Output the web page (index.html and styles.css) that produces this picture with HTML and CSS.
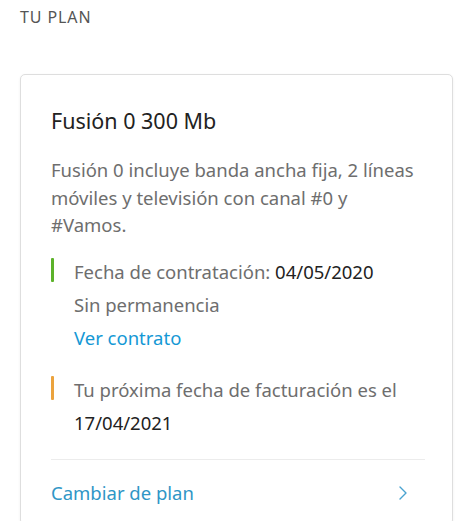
FILE: index.html
```html
<!DOCTYPE html>
<html lang="es">
<head>
<meta charset="utf-8">
<title>Tu plan</title>
<link rel="stylesheet" href="styles.css">
</head>
<body>
<div class="page">
  <h2 class="section-title">TU PLAN</h2>
  <div class="card">
    <div class="card-body">
      <h3 class="plan-name">Fusión 0 300 Mb</h3>
      <p class="plan-desc">Fusión 0 incluye banda ancha fija, 2 líneas móviles y televisión con canal #0 y #Vamos.</p>
      <div class="info info-green">
        <p class="info-line">Fecha de contratación: <span class="strong">04/05/2020</span></p>
        <p class="info-line">Sin permanencia</p>
        <p class="info-line"><a class="link" href="#">Ver contrato</a></p>
      </div>
      <div class="info info-orange">
        <p class="info-line">Tu próxima fecha de facturación es el <span class="strong">17/04/2021</span></p>
      </div>
    </div>
    <div class="card-action">
      <span class="action-text">Cambiar de plan</span>
      <svg class="chevron" width="10" height="16" viewBox="0 0 10 16"><path d="M2 2 L8 8 L2 14" fill="none" stroke="#4aa3d0" stroke-width="1.4" stroke-linecap="round" stroke-linejoin="round"/></svg>
    </div>
  </div>
</div>
</body>
</html>
```

FILE: styles.css
```css
* { box-sizing: border-box; }
html, body { margin: 0; padding: 0; background: #fff; }
body {
  font-family: "Noto Sans", "Open Sans", sans-serif;
  color: #6e6e6e;
  width: 474px;
  height: 521px;
  overflow: hidden;
}
.page { padding: 7px 21px 0 20px; }
.section-title {
  margin: 0;
  font-size: 16px;
  letter-spacing: 0.9px;
  line-height: 20px;
  font-weight: 400;
  color: #555;
}
.card {
  margin-top: 47px;
  border: 1px solid #dedede;
  border-radius: 5px;
  box-shadow: 0 1px 3px rgba(0,0,0,0.06);
  background: #fff;
  padding: 0 27px 0 30px;
}
.card-body { padding-top: 32px; padding-bottom: 20px; border-bottom: 1px solid #ececec; }
.plan-name {
  margin: 0;
  font-size: 21.5px;
  line-height: 28px;
  font-weight: 400;
  color: #222;
}
.plan-desc {
  margin: 21px 0 0 0;
  font-size: 18.5px;
  line-height: 27.5px;
}
.info {
  position: relative;
  padding-left: 23px;
  margin-top: 16px;
}
.info::before {
  content: "";
  position: absolute;
  left: 0; top: 3px;
  width: 3px; height: 24px;
  border-radius: 1px;
}
.info-green::before { background: #5cb22a; }
.info-orange::before { background: #eba33e; }
.info-orange { margin-top: 19px; }
.info-line {
  margin: 0;
  font-size: 18.5px;
  line-height: 33px;
}
.strong { color: #222; }
.link { color: #1498d5; text-decoration: none; }
.card-action {
  display: flex;
  align-items: center;
  justify-content: space-between;
  padding: 18px 17px 16px 0;
}
.action-text { font-size: 18.5px; line-height: 30px; color: #2f96c6; }
.chevron { display: block; }
```
